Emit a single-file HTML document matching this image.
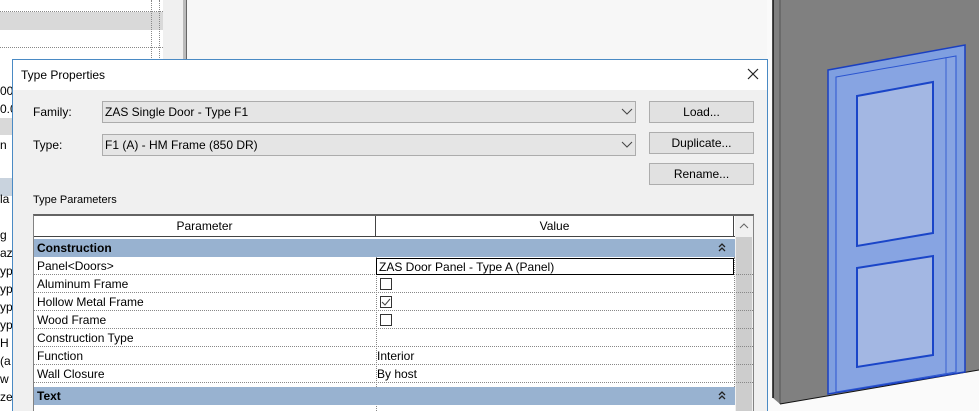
<!DOCTYPE html>
<html><head><style>
*{margin:0;padding:0;box-sizing:border-box}
html,body{width:979px;height:411px;overflow:hidden}
body{background:#f7f7f7;font-family:"Liberation Sans",sans-serif;font-size:12px;color:#000;position:relative}
.a{position:absolute}
.row{position:absolute;left:0;width:719px;height:18px;border-bottom:1px dotted #888}
.row span{position:absolute;top:2px;left:3px}
.row .v{left:343px}
.cat{background:#98b2d0;font-weight:bold;border-bottom:none}
.btn{position:absolute;left:649px;width:105px;height:22px;background:#e1e1e1;border:1px solid #adadad;text-align:center;line-height:20px}
.combo{position:absolute;left:102px;width:534px;height:22px;background:#e5e5e5;border:1px solid #acacac;line-height:20px;padding-left:2px}
.cb{position:absolute;left:4px;top:3px;width:12px;height:12px;border:1px solid #333;background:#fff}
</style></head><body>
<div class="a" style="left:0;top:0;width:163px;height:411px;background:#fff"></div>
<div class="a" style="left:0;top:12px;width:163px;height:18px;background:#d9d9d9"></div>
<div class="a" style="left:0;top:11px;width:163px;border-top:1px dotted #888"></div>
<div class="a" style="left:0;top:47px;width:163px;border-top:1px dotted #888"></div>
<div class="a" style="left:151px;top:0;height:60px;border-left:1px dotted #888"></div>
<div class="a" style="left:159px;top:0;height:60px;border-left:1px dotted #888"></div>
<div class="a" style="left:163px;top:0;width:20px;height:60px;background:#f0f0f0"></div>
<div class="a" style="left:183px;top:0;width:4px;height:60px;background:#bbb;border-right:1px solid #666"></div>
<div class="a" style="left:0;top:118px;width:12px;height:17px;background:#d9d9d9"></div>
<div class="a" style="left:0;top:178px;width:12px;height:18px;background:#c9d3de"></div>
<div class="a" style="left:0;top:82px;font-size:12px;line-height:18px">00<br>0.0<br><br>n<br><br><br>la<br><br>g<br>az<br>yp<br>yp<br>yp<br>yp<br>H<br>(a<br>w<br>ze<br>ze</div>
<div class="a" style="left:767px;top:0;width:212px;height:411px;background:#fafafa"></div>
<svg class="a" style="left:760px;top:0" width="219" height="411">
<polygon points="13,0 219,0 219,370 20,404 13,398" fill="#808080"/>
<line x1="13" y1="0" x2="13" y2="398" stroke="#111" stroke-width="1.5"/>
<line x1="20" y1="0" x2="20" y2="404" stroke="#555"/>
<line x1="20" y1="404" x2="219" y2="370" stroke="#111"/>
<polygon points="68,70 205,45 205,372 68,394" fill="#7f9fe0" stroke="#1a3fc0" stroke-width="1.5"/>
<polygon points="76,77 196,56 196,372 76,392" fill="#87a4e2" stroke="#2b55d0"/>
<line x1="186" y1="57" x2="186" y2="374" stroke="#3a5fd0"/>
<polygon points="97,96 173,82 173,233 97,246" fill="#a3b7e3" stroke="#1a45c8" stroke-width="2"/>
<polygon points="97,268 173,256 173,355 97,367" fill="#a3b7e3" stroke="#1a45c8" stroke-width="2"/>
</svg>
<div class="a" style="left:12px;top:59px;width:756px;height:360px;background:#f0f0f0;border:1px solid #4a8ac4">
 <div class="a" style="left:0;top:0;width:754px;height:30px;background:#fff"></div>
 <div class="a" style="left:8px;top:8px;font-size:12px">Type Properties</div>
 <svg class="a" style="left:734px;top:8px" width="12" height="12"><path d="M1,1 L11,11 M11,1 L1,11" stroke="#222" stroke-width="1.2"/></svg>
 <div class="a" style="left:20px;top:45px">Family:</div>
 <div class="a" style="left:20px;top:78px">Type:</div>
 <div class="combo" style="left:89px;top:41px">ZAS Single Door - Type F1</div>
 <div class="combo" style="left:89px;top:74px">F1 (A) - HM Frame (850 DR)</div>
 <svg class="a" style="left:608px;top:48px" width="12" height="8"><path d="M1,1 L6,6 L11,1" fill="none" stroke="#444"/></svg>
 <svg class="a" style="left:608px;top:81px" width="12" height="8"><path d="M1,1 L6,6 L11,1" fill="none" stroke="#444"/></svg>
 <div class="btn" style="left:636px;top:41px">Load...</div>
 <div class="btn" style="left:636px;top:72px">Duplicate...</div>
 <div class="btn" style="left:636px;top:103px">Rename...</div>
 <div class="a" style="left:20px;top:134px;font-size:11px">Type Parameters</div>
 <div class="a" style="left:20px;top:154px;width:721px;height:210px;background:#fff;border:1px solid #828282;border-top:2px solid #646464">
  <div class="a" style="left:0;top:0;width:701px;height:21px;border-bottom:1px solid #444">
   <div class="a" style="left:0;top:0;width:342px;height:20px;text-align:center;line-height:20px;border-right:1px solid #444">Parameter</div>
   <div class="a" style="left:342px;top:0;width:358px;height:20px;text-align:center;line-height:20px;border-right:1px solid #444">Value</div>
  </div>
  <div class="a" style="left:701px;top:0;width:18px;height:210px;background:#f0f0f0"></div>
  <div class="a" style="left:702px;top:21px;width:16px;height:190px;background:#cdcdcd"></div>
  <svg class="a" style="left:705px;top:7px" width="10" height="6"><path d="M1,5 L5,1 L9,5" fill="none" stroke="#666"/></svg>
  <div class="a" style="left:342px;top:41px;height:170px;border-left:1px dotted #888"></div>
  <div class="a" style="left:700px;top:41px;height:130px;border-left:1px dotted #888"></div>
  <div class="row cat" style="top:23px;width:701px"><span>Construction</span><svg style="position:absolute;left:684px;top:4px" width="8" height="10"><path d="M1,4 L4,1 L7,4 M1,8 L4,5 L7,8" fill="none" stroke="#222" stroke-width="1.3"/></svg></div>
  <div class="row" style="top:41px"><span>Panel&lt;Doors&gt;</span></div>
  <div class="a" style="left:342px;top:42px;width:358px;height:17px;border:1px solid #000;padding:1px 2px">ZAS Door Panel - Type A (Panel)</div>
  <div class="row" style="top:59px"><span>Aluminum Frame</span><div class="cb" style="left:346px"></div></div>
  <div class="row" style="top:77px"><span>Hollow Metal Frame</span><div class="cb" style="left:346px"><svg width="10" height="10" style="position:absolute;left:0;top:0"><path d="M1,5 L4,8 L9,2" fill="none" stroke="#444"/></svg></div></div>
  <div class="row" style="top:95px"><span>Wood Frame</span><div class="cb" style="left:346px"></div></div>
  <div class="row" style="top:113px"><span>Construction Type</span></div>
  <div class="row" style="top:131px"><span>Function</span><span class="v">Interior</span></div>
  <div class="row" style="top:149px"><span>Wall Closure</span><span class="v">By host</span></div>
  <div class="row cat" style="top:171px;width:701px"><span>Text</span><svg style="position:absolute;left:684px;top:4px" width="8" height="10"><path d="M1,4 L4,1 L7,4 M1,8 L4,5 L7,8" fill="none" stroke="#222" stroke-width="1.3"/></svg></div>
 </div>
</div>
</body></html>
